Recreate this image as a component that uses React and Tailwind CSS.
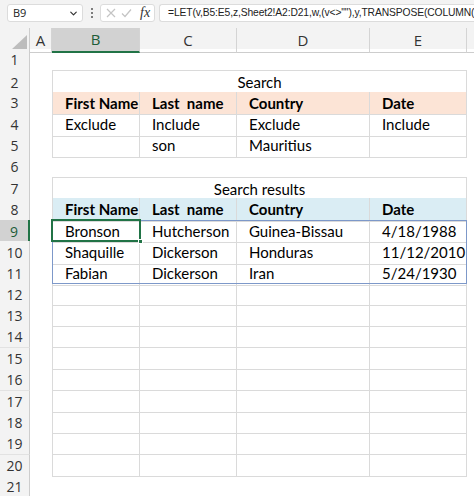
import React from "react";
import { ChevronDown } from "lucide-react";

const COLS = "grid grid-cols-[30px_22px_88px_97px_133px_97px_1fr]";
const ROWH = "h-[21.35px]";
const LINE = "border-[#dadada]";

const rows = [
  { n: 1, type: "blank" },
  { n: 2, type: "title", text: "Search" },
  { n: 3, type: "head", fill: "bg-[#fce4d6]", cells: ["First Name", "Last  name", "Country", "Date"] },
  { n: 4, type: "data", cells: ["Exclude", "Include", "Exclude", "Include"] },
  { n: 5, type: "data", cells: ["", "son", "Mauritius", ""] },
  { n: 6, type: "blank" },
  { n: 7, type: "title", text: "Search results" },
  { n: 8, type: "head", fill: "bg-[#daedf4]", cells: ["First Name", "Last  name", "Country", "Date"] },
  { n: 9, type: "data", cells: ["Bronson", "Hutcherson", "Guinea-Bissau", "4/18/1988"] },
  { n: 10, type: "data", cells: ["Shaquille", "Dickerson", "Honduras", "11/12/2010"] },
  { n: 11, type: "data", cells: ["Fabian", "Dickerson", "Iran", "5/24/1930"] },
  ...[12, 13, 14, 15, 16, 17, 18, 19, 20].map((n) => ({ n, type: "data", cells: ["", "", "", ""] })),
  { n: 21, type: "blank" },
];

function RowHeader({ n }) {
  const sel = n === 9;
  return (
    <div
      className={
        "flex items-center justify-center border-b border-b-[#e2e2e2] text-[14px] " +
        (sel
          ? "bg-[#d2d2d2] border-r-2 border-r-[#217346] text-[#1d5c38]"
          : "bg-[#f3f3f3] border-r border-r-[#cdcdcd] text-[#333]")
      }
      style={{ fontFamily: "'Open Sans', sans-serif" }}
    >
      {n}
    </div>
  );
}

function Row({ r }) {
  return (
    <div className={COLS + " " + ROWH}>
      <RowHeader n={r.n} />
      <div />
      {r.type === "blank" && (
        <>
          <div />
          <div />
          <div />
          <div />
        </>
      )}
      {r.type === "title" && (
        <div className={"col-span-4 flex items-center justify-center border " + LINE}>{r.text}</div>
      )}
      {(r.type === "head" || r.type === "data") &&
        r.cells.map((c, i) => (
          <div
            key={i}
            className={
              "flex items-center pl-3 whitespace-pre border-b border-r " +
              LINE +
              (i === 0 ? " border-l" : "") +
              (r.type === "head" ? " font-bold " + r.fill : "")
            }
          >
            {c}
          </div>
        ))}
      <div />
    </div>
  );
}

export default function App() {
  const colHeads = ["A", "B", "C", "D", "E"];
  return (
    <div
      className="w-[474px] h-[496px] overflow-hidden bg-white text-[15px] text-black"
      style={{ fontFamily: "Lato, 'Liberation Sans', sans-serif" }}
    >
      {/* Formula bar */}
      <div
        className="h-[28px] bg-[#f3f3f3] flex items-start pt-[4px] pl-[7px] gap-0"
        style={{ fontFamily: "'Open Sans', 'Noto Sans', sans-serif" }}
      >
        <div className="w-[76px] h-[18px] bg-white border border-[#dcdcdc] rounded-[3px] flex items-center pl-[5px] pr-[3px] text-[11px] text-[#222]">
          <span className="flex-1">B9</span>
          <ChevronDown size={11} strokeWidth={2.6} color="#333" />
        </div>
        <div className="w-[17px] h-[18px] flex flex-col items-center justify-center gap-[2px]">
          <span className="w-[2px] h-[2px] bg-[#555] rounded-full" />
          <span className="w-[2px] h-[2px] bg-[#555] rounded-full" />
          <span className="w-[2px] h-[2px] bg-[#555] rounded-full" />
        </div>
        <div className="w-[55px] h-[18px] bg-white border border-[#dcdcdc] rounded-[3px] flex items-center pl-[5px] gap-[5px]">
          <svg width="10" height="10" viewBox="0 0 10 10">
            <path d="M1 1 L9 9 M9 1 L1 9" stroke="#c4c4c4" strokeWidth="1.2" fill="none" />
          </svg>
          <svg width="11" height="10" viewBox="0 0 11 10">
            <path d="M1 5.5 L4 8.5 L10 1.5" stroke="#c4c4c4" strokeWidth="1.2" fill="none" />
          </svg>
          <span
            className="italic text-[14px] text-[#333] leading-none ml-[3px]"
            style={{ fontFamily: "'Liberation Serif', serif" }}
          >
            fx
          </span>
        </div>
        <div
          className="ml-[4px] flex-1 h-[18px] bg-white border border-[#dcdcdc] border-r-0 rounded-l-[3px] flex items-center pl-[8px] text-[10.3px] tracking-[-0.12px] text-[#222] whitespace-nowrap overflow-hidden"
          style={{ fontFamily: "'Liberation Sans', sans-serif" }}
        >
          {'=LET(v,B5:E5,z,Sheet2!A2:D21,w,(v<>""),y,TRANSPOSE(COLUMN(v'}
        </div>
      </div>

      {/* Column headers */}
      <div
        className={COLS + " h-[21px] bg-[#f3f3f3] text-[15px] text-[#333]"}
        style={{ fontFamily: "'Open Sans', sans-serif" }}
      >
        <div className="relative border-r border-b border-[#cdcdcd]">
          <svg className="absolute right-[2px] bottom-[2px]" width="16" height="15" viewBox="0 0 16 15">
            <path d="M16 0 L16 15 L0 15 Z" fill="#bdbdbd" />
          </svg>
        </div>
        {colHeads.map((h) => (
          <div
            key={h}
            className={
              "flex items-center justify-center border-r border-[#d4d4d4] " +
              (h === "B"
                ? "bg-[#d2d2d2] border-b-2 border-b-[#217346] text-[#1d5c38]"
                : "border-b border-b-[#cdcdcd]")
            }
          >
            {h}
          </div>
        ))}
        <div className="border-b border-b-[#cdcdcd]" />
      </div>

      {/* Grid */}
      <div className="relative">
        {rows.map((r) => (
          <Row key={r.n} r={r} />
        ))}
        {/* results range border */}
        <div className="absolute left-[52px] top-[170.8px] w-[415px] h-[64px] border border-[#7d98c9] pointer-events-none" />
        {/* active cell */}
        <div className="absolute left-[51px] top-[170px] w-[90px] h-[22.5px] border-2 border-[#217346] pointer-events-none">
          <div className="absolute right-[-4px] bottom-[-4px] w-[5px] h-[5px] bg-[#217346] border border-white" />
        </div>
      </div>
    </div>
  );
}
